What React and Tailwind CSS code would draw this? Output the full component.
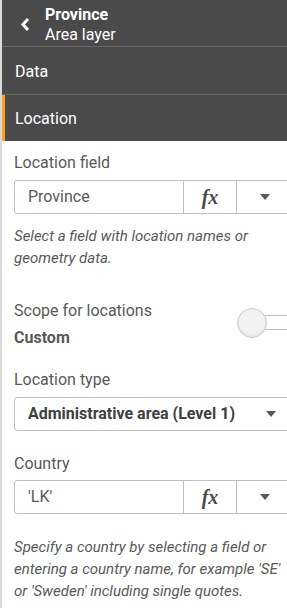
import React from "react";

function Caret() {
  return (
    <svg width="10" height="6" viewBox="0 0 10 6">
      <path d="M0 0 L10 0 L5 6 Z" fill="#595959" />
    </svg>
  );
}

function FieldInput({ value }) {
  return (
    <div className="flex h-[34px] w-[290px] border border-[#bfbfbf] rounded-l-[3px] bg-white">
      <div className="flex-1 flex items-center pl-[13px] text-[16px] text-[#595959]">
        {value}
      </div>
      <div className="w-[53px] flex items-center justify-center border-l border-[#bfbfbf]">
        <span className="font-['Liberation_Serif',serif] italic font-bold text-[20px] text-[#4a4a4a] leading-none">
          fx
        </span>
      </div>
      <div className="w-[67px] flex items-center pl-[23px] border-l border-[#bfbfbf]">
        <Caret />
      </div>
    </div>
  );
}

export default function App() {
  return (
    <div className="w-[287px] h-[608px] overflow-hidden bg-white border-l-2 border-[#d9d9d9] font-['Roboto',sans-serif]">
      {/* Header */}
      <div className="bg-[#4a4a4a] text-white">
        <div className="h-[47px] flex items-center pt-[3px] border-b border-[#656565]">
          <div className="w-[43px] flex justify-center pl-[3px]">
            <svg width="10" height="15" viewBox="0 0 10 15">
              <path d="M8 2 L3 7.5 L8 13" fill="none" stroke="white" strokeWidth="3" />
            </svg>
          </div>
          <div className="flex flex-col leading-[20px]">
            <span className="font-bold text-[16px]">Province</span>
            <span className="text-[16px]">Area layer</span>
          </div>
        </div>
        <div className="h-[48px] flex items-center pl-[13px] pt-[2px] text-[16px] border-b border-[#656565]">
          Data
        </div>
        <div className="h-[46px] flex items-center pl-[10px] pt-[1px] text-[16px] border-l-[3px] border-[#ff9f1a]">
          Location
        </div>
      </div>

      {/* Body */}
      <div className="pl-[12px] pt-[12px] text-[#595959]">
        <div className="text-[16px] leading-[20px]">Location field</div>
        <div className="mt-[7px]">
          <FieldInput value="Province" />
        </div>
        <p className="mt-[11px] text-[15px] leading-[22px] italic pr-[20px]">
          Select a field with location names or geometry data.
        </p>

        <div className="mt-[32px] flex justify-between">
          <div>
            <div className="text-[16px] leading-[20px]">Scope for locations</div>
            <div className="mt-[7px] text-[16px] leading-[20px] font-bold">Custom</div>
          </div>
          <div className="relative w-[50px] h-[30px] mt-[7px]">
            <div className="absolute left-[13px] top-[7px] w-[60px] h-[15px] border border-[#bfbfbf] bg-white" />
            <div className="absolute left-0 top-0 w-[30px] h-[30px] rounded-full border border-[#c8c8c8] bg-[#f2f2f2] shadow-[inset_0_-2px_3px_rgba(0,0,0,0.06)]" />
          </div>
        </div>

        <div className="mt-[22px] text-[16px] leading-[20px]">Location type</div>
        <div className="mt-[7px] flex items-center h-[34px] w-[290px] border border-[#bfbfbf] rounded-l-[3px]">
          <span className="flex-1 pl-[13px] text-[16px] font-bold text-[#404040]">
            Administrative area (Level 1)
          </span>
          <span className="pr-[27px]">
            <Caret />
          </span>
        </div>

        <div className="mt-[23px] text-[16px] leading-[20px]">Country</div>
        <div className="mt-[6px]">
          <FieldInput value="'LK'" />
        </div>
        <p className="mt-[22px] text-[15px] leading-[22px] italic pr-[2px]">
          Specify a country by selecting a field or entering a country name, for example 'SE' or 'Sweden' including single quotes.
        </p>
      </div>
    </div>
  );
}
